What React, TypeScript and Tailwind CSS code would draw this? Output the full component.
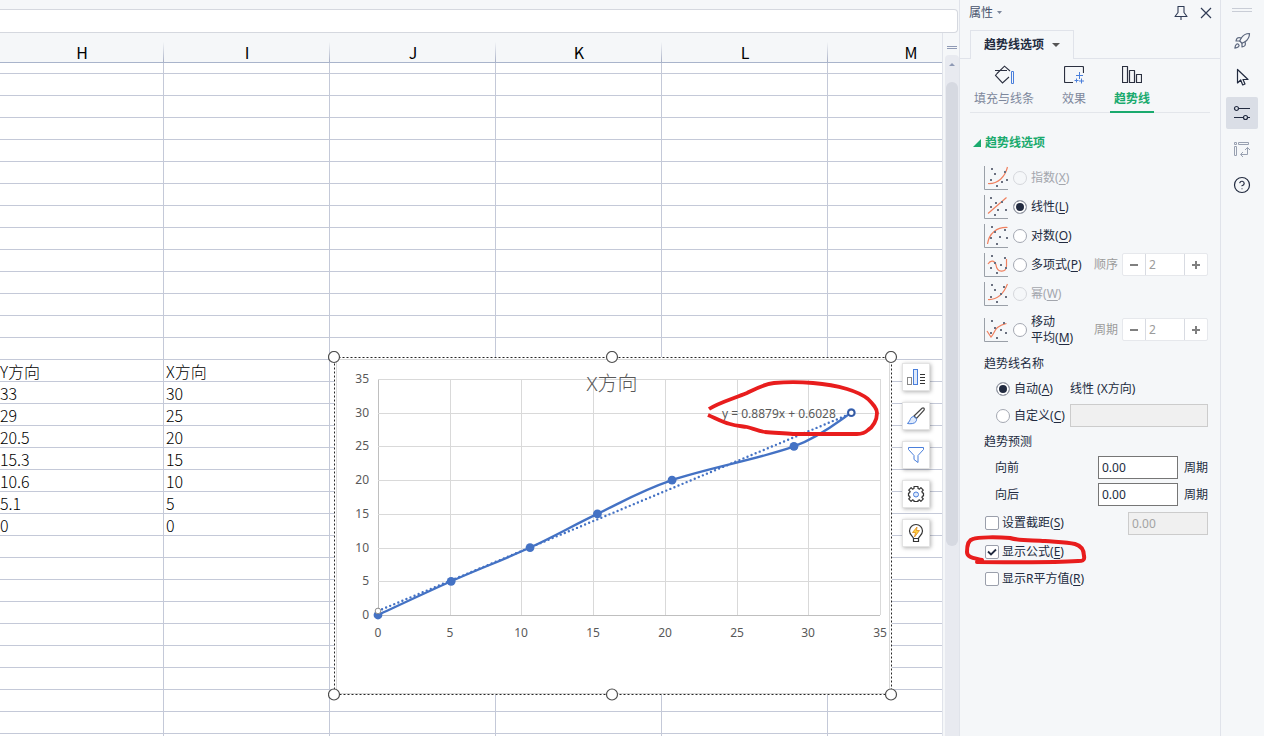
import type { ReactNode } from "react";
import { CircleHelp, Rocket } from "lucide-react";
import clsx from "clsx";

const COLUMNS = ["H", "I", "J", "K", "L", "M"];
const FIRST_DATA_ROW = 14;
const ROW_COUNT = 32;

const DATA = [
    ["Y方向", "X方向"],
    ["33", "30"],
    ["29", "25"],
    ["20.5", "20"],
    ["15.3", "15"],
    ["10.6", "10"],
    ["5.1", "5"],
    ["0", "0"],
];

const POINTS = [
    [0, 0],
    [5.1, 5],
    [10.6, 10],
    [15.3, 15],
    [20.5, 20],
    [29, 25],
    [33, 30],
];

const TICKS = [0, 5, 10, 15, 20, 25, 30, 35];

// chart value -> svg coordinate
const toX = (v: number) => 50 + (v * 502) / 35;
const toY = (v: number) => 264 - (v * 236) / 35;

function smoothPath(points: number[][]) {
    const p = points.map(([x, y]) => [toX(x), toY(y)]);
    let d = `M${p[0][0]} ${p[0][1]}`;
    for (let i = 0; i < p.length - 1; i++) {
        const prev = p[i - 1] ?? p[i];
        const next = p[i + 2] ?? p[i + 1];
        const c1 = [p[i][0] + (p[i + 1][0] - prev[0]) / 6, p[i][1] + (p[i + 1][1] - prev[1]) / 6];
        const c2 = [p[i + 1][0] - (next[0] - p[i][0]) / 6, p[i + 1][1] - (next[1] - p[i][1]) / 6];
        d += `C${c1.join(" ")} ${c2.join(" ")} ${p[i + 1].join(" ")}`;
    }
    return d;
}

function TrendChart() {
    const handles = [
        [6, 6], [284, 6], [563, 6],
        [6, 343.5], [284, 343.5], [563, 343.5],
    ];

    return (
        <svg width="570" height="350" viewBox="0 0 570 350" className="shrink-0 font-['Noto_Sans','Noto_Sans_CJK_SC',sans-serif]">
            <rect x="6" y="6" width="558" height="338" fill="#fff" />
            <rect x="8.5" y="8.5" width="553" height="334" fill="#fff" stroke="#d9d9d9" />
            {TICKS.map((t) => (
                <g key={t} stroke={t === 0 ? "#bfbfbf" : "#d9d9d9"}>
                    <path d={`M50 ${Math.round(toY(t)) + 0.5}H552`} />
                    <path d={`M${Math.round(toX(t)) + 0.5} 28V264`} />
                </g>
            ))}
            <g fill="#595959" fontSize="12">
                {TICKS.map((t) => (
                    <g key={t}>
                        <text x="41" y={Math.round(toY(t)) + 4} textAnchor="end">{t}</text>
                        <text x={Math.round(toX(t))} y="286" textAnchor="middle">{t}</text>
                    </g>
                ))}
                <text x="394" y="67">y = 0.8879x + 0.6028</text>
                <text x="284" y="40" fontSize="20" fontWeight="300" textAnchor="middle">X方向</text>
            </g>
            <path
                d={`M${toX(0)} ${toY(0.6028)}L${toX(33)} ${toY(29.9)}`}
                stroke="#4472c4"
                strokeWidth="2.4"
                strokeLinecap="round"
                strokeDasharray="0 4.4"
            />
            <path d={smoothPath(POINTS)} fill="none" stroke="#4472c4" strokeWidth="2.3" />
            {POINTS.map(([x, y]) => (
                <circle key={x} cx={toX(x)} cy={toY(y)} r="4.4" fill="#4472c4" />
            ))}
            <circle cx={toX(33)} cy={toY(30)} r="3" fill="#fff" stroke="#35589f" strokeWidth="1.5" />
            <circle cx={toX(0)} cy={toY(0.6028)} r="2.8" fill="#fff" stroke="#8c8c8c" />
            <rect x="6.5" y="6.5" width="557" height="337" fill="none" stroke="#262626" strokeDasharray="2 2" />
            {handles.map(([x, y]) => (
                <circle key={`${x}-${y}`} cx={x} cy={y} r="5.5" fill="#fff" stroke="#4d4d4d" strokeWidth="1.2" />
            ))}
            <path
                d="M381 58C390 52 404 48 419 42C429 37 436 33 446 32C458 31 472 31 485 32C498 33 509 35 519 38C529 41 535 44 540 48C545 53 549 57 549 62C549 69 545 76 540 79C537 82 534 83 529 83H465C455 82 446 82 437 81C431 80 426 78 419 76C413 75 408 75 402 73C394 71 387 67 380 64"
                fill="none"
                stroke="#e81d1d"
                strokeWidth="3.8"
                strokeLinejoin="round"
            />
        </svg>
    );
}

function ChartTools() {
    const tools: { label: string; icon: ReactNode }[] = [
        {
            label: "图表元素",
            icon: (
                <>
                    <rect x="1.5" y="10.5" width="4" height="7" stroke="#888" />
                    <rect x="7.5" y="2.5" width="4" height="15" fill="#dfeafb" stroke="#4a7fdb" />
                    <path d="M14 7.5h5M14 10.5h5M14 13.5h5M14 16.5h5" stroke="#333" />
                </>
            ),
        },
        {
            label: "图表样式",
            icon: (
                <>
                    <path d="M8 10 16 2.2c1.5-1 3 .4 2 2L10.5 12.5z" stroke="#444" strokeWidth="1.2" />
                    <path d="M7.5 10.5c-3 .3-3 3-4 4.5L1.5 17.5c3 .6 7 .3 8.5-2 .8-1.2.6-2.2.3-3z" fill="#dfeafb" stroke="#4a7fdb" />
                </>
            ),
        },
        {
            label: "图表筛选",
            icon: <path d="M2.5 2.5h15v2l-5.5 6v7l-4-3v-4l-5.5-6z" stroke="#4a7fdb" />,
        },
        {
            label: "设置图表区域格式",
            icon: (
                <>
                    <path
                        d="M8 2.5h4v2l1.5.6 1.4-1.4 2.4 2.4-1.4 1.4.6 1.5h1v3h-1l-.6 1.5 1.4 1.4-2.4 2.4-1.4-1.4-1.5.6v1h-4v-1l-1.5-.6-1.4 1.4-2.4-2.4 1.4-1.4-.6-1.5h-1V9h1l.6-1.5-1.4-1.4 2.4-2.4 1.4 1.4L8 4.5z"
                        stroke="#333"
                        strokeWidth="1.2"
                        strokeLinejoin="round"
                    />
                    <circle cx="10" cy="10.5" r="2.5" fill="#dfeafb" stroke="#4a7fdb" />
                </>
            ),
        },
        {
            label: "智能推荐",
            icon: (
                <>
                    <path d="M7.5 15.5c0-2-4-3.5-4-7.500a6.500 6.500 0 0 1 13 0c0 4-4 5.500-4 7.500zM7.500 15.500v3h5v-3" stroke="#333" strokeWidth="1.2" />
                    <path d="M11 4 6.5 9.500h3l-1 4.500 5-6.500h-3z" fill="#ffd23f" stroke="#e08a1c" strokeWidth=".8" />
                </>
            ),
        },
    ];

    return (
        <div className="flex flex-col gap-[11px] pt-3">
            {tools.map((t) => (
                <button
                    key={t.label}
                    aria-label={t.label}
                    className="flex size-7 items-center justify-center border border-[#e3e3e3] bg-white shadow-[1px_1px_4px_rgba(0,0,0,0.3)]"
                >
                    <svg width="20" height="20" viewBox="0 0 20 20" fill="none">
                        {t.icon}
                    </svg>
                </button>
            ))}
        </div>
    );
}

function Sheet() {
    return (
        <div className="relative min-w-0 flex-1 overflow-hidden bg-white">
            <table className="w-[994px] table-fixed border-separate border-spacing-0 font-['Noto_Sans_CJK_SC',sans-serif] text-base font-light text-black">
                <thead>
                    <tr className="h-[30px] bg-[#f5f7f9]">
                        {COLUMNS.map((c) => (
                            <th
                                key={c}
                                className={clsx(
                                    "border-b border-[#a9b4cb] bg-[linear-gradient(to_bottom,#f5f7f9_30%,#a9b0c6)] bg-[length:1px_100%] bg-right bg-no-repeat p-0 pt-2 text-center leading-5 font-normal",
                                    c === "H" ? "w-[164px]" : "w-[166px]",
                                )}
                            >
                                {c}
                            </th>
                        ))}
                    </tr>
                </thead>
                <tbody>
                    {Array.from({ length: ROW_COUNT }, (_, r) => (
                        <tr key={r} className={r === 0 ? "h-[11px]" : "h-[22px]"}>
                            {COLUMNS.map((c, i) => (
                                <td
                                    key={c}
                                    className={clsx(
                                        "border-r border-b border-[#c4c9d8] p-0 whitespace-nowrap",
                                        r >= FIRST_DATA_ROW && "pt-px leading-5",
                                        i > 0 && "pl-0.5",
                                    )}
                                >
                                    {DATA[r - FIRST_DATA_ROW]?.[i]}
                                </td>
                            ))}
                        </tr>
                    ))}
                </tbody>
            </table>
            <div className="absolute top-[318px] left-[328px] flex gap-1">
                <TrendChart />
                <ChartTools />
            </div>
        </div>
    );
}

function VerticalScroll() {
    return (
        <div className="flex w-[17px] shrink-0 flex-col border-l border-[#e0e3ea] pl-0.5">
            <div className="flex h-[22px] items-end justify-center pb-1.5">
                <div className="h-[3px] w-2.5 border-y border-[#8f9ab5]" />
            </div>
            <div className="flex flex-1 flex-col items-center rounded-t-sm bg-[#e8eaf0] pt-2">
                <svg width="6" height="3" viewBox="0 0 6 3">
                    <path d="M0 3 3 0l3 3z" fill="#8f9ab5" />
                </svg>
                <div className="mt-4 h-[69%] w-3 rounded-full bg-[#d6d9e1]" />
            </div>
        </div>
    );
}

const RADIO =
    "size-3.5 shrink-0 appearance-none rounded-full border border-[#a4a8b2] bg-white checked:bg-[#222b40] checked:shadow-[inset_0_0_0_2px_#fff] disabled:border-[#d5d7dc] disabled:bg-transparent";
const CHECKBOX = "col-start-1 row-start-1 size-3.5 appearance-none rounded-xs border border-[#9a9fab] bg-white";

function Key({ children }: { children: string }) {
    return (
        <>
            (<span className="underline underline-offset-2">{children}</span>)
        </>
    );
}

function TrendGlyph({ curve, dots }: { curve: string; dots: number[][] }) {
    return (
        <svg width="24" height="24" viewBox="0 0 24 24" fill="none" className="shrink-0">
            <path d="M.5 0v23.5H24" stroke="#9aa0a8" />
            <path d={curve} stroke="#f0805f" strokeWidth="1.2" />
            {dots.map(([x, y]) => (
                <rect key={`${x}-${y}`} x={x} y={y} width="2" height="2" fill="#6b7180" />
            ))}
        </svg>
    );
}

function Stepper({ label }: { label: string }) {
    return (
        <div className="ml-auto flex items-center gap-1 text-[#9b9b9b]">
            <label htmlFor={label}>{label}</label>
            <div className="flex h-[23px] w-[86px] rounded-xs border border-[#e6e8ec] bg-white">
                <button aria-label="减" disabled className="flex w-[22px] items-center justify-center">
                    <span className="h-0.5 w-2 bg-[#808080]" />
                </button>
                <input
                    id={label}
                    disabled
                    defaultValue="2"
                    className="w-10 border-x border-[#d8dbe2] px-[3px]"
                />
                <button aria-label="加" disabled className="flex w-[22px] items-center justify-center">
                    <svg width="8" height="8" viewBox="0 0 8 8">
                        <path d="M0 4h8M4 0v8" stroke="#808080" strokeWidth="2" />
                    </svg>
                </button>
            </div>
        </div>
    );
}

const TREND_TYPES = [
    {
        name: "指数",
        hotkey: "X",
        disabled: true,
        curve: "M4 17.5C14 18 21 11 23.5 1",
        dots: [[7, 2], [10, 7], [20, 5], [6, 13], [17, 15], [22, 13], [12, 19]],
    },
    {
        name: "线性",
        hotkey: "L",
        curve: "M4 18.5 22.5 2.5",
        dots: [[6, 2], [11, 7], [17, 6], [6, 11], [13, 14], [21, 14], [10, 19]],
    },
    {
        name: "对数",
        hotkey: "O",
        curve: "M3.5 20C5 9 13 3 23.5 3.5",
        dots: [[7, 2], [10, 7], [20, 5], [6, 13], [15, 12], [22, 13], [12, 19]],
    },
    {
        name: "多项式",
        hotkey: "P",
        stepper: "顺序",
        curve: "M4 11C7 6 11 8 12 12C13 20 22 20 22.5 13V6",
        dots: [[7, 2], [10, 9], [20, 4], [6, 14], [16, 11], [21, 14], [12, 19]],
    },
    {
        name: "幂",
        hotkey: "W",
        disabled: true,
        curve: "M4 17.5C14 18 20 11 23.5 2",
        dots: [[7, 2], [10, 7], [19, 4], [6, 14], [16, 11], [21, 14], [12, 19]],
    },
    {
        name: "移动平均",
        hotkey: "M",
        stepper: "周期",
        curve: "M3 13 7 19C12 14 9 9 22.5 5.5",
        dots: [[7, 2], [10, 9], [19, 4], [6, 14], [16, 11], [21, 14], [12, 19]],
    },
];

function PanelTabs() {
    const tabs = [
        {
            label: "填充与线条",
            icon: (
                <>
                    <path d="M3 8.5 1.5 10.5 8.5 18 15 12M3 8.5 10.5 1.2 16 6M1 5.5h12" stroke="#2b3040" strokeWidth="1.1" />
                    <path d="M17.5 6.5h2v12h-2z" stroke="#4a7fdb" />
                </>
            ),
        },
        {
            label: "效果",
            icon: (
                <>
                    <path d="M19.5 8V2.5q0-1-1-1h-17q-1 0-1 1v14q0 1 1 1H9" stroke="#2b3040" strokeWidth="1.2" />
                    <path d="M15.5 7v7M12 10.5h7M12.5 13.5v4M10.5 15.5h4M17.5 13.5v5M15 16h5" stroke="#4a7fdb" />
                </>
            ),
        },
        {
            label: "趋势线",
            active: true,
            icon: (
                <path
                    d="M.5 1.5h5v16h-5zM7.5 5.5h5v12h-5zM14.5 9.5h5v8h-5z"
                    stroke="#2b3040"
                    strokeWidth="1.2"
                    strokeLinejoin="round"
                />
            ),
        },
    ];

    return (
        <div className="mx-2.5 flex gap-5 border-b border-[#e3e6eb]">
            {tabs.map((t) => (
                <button
                    key={t.label}
                    className={clsx(
                        "-mb-px flex flex-col items-center border-b-2 px-1 pt-1.5 pb-[3px]",
                        t.active ? "border-[#1aaa6e] font-bold text-[#1aaa6e]" : "border-transparent text-[#7d879c]",
                    )}
                >
                    <svg width="20" height="20" viewBox="0 0 20 20" fill="none">
                        {t.icon}
                    </svg>
                    <span className="mt-[5px] leading-[18px]">{t.label}</span>
                </button>
            ))}
        </div>
    );
}

function Check({ label, hotkey, checked }: { label: string; hotkey: string; checked?: boolean }) {
    return (
        <label className="flex items-center gap-[3px] pl-px">
            <span className="grid">
                <input type="checkbox" defaultChecked={checked} className={clsx("peer", CHECKBOX)} />
                <svg
                    width="14"
                    height="14"
                    viewBox="0 0 14 14"
                    fill="none"
                    className="pointer-events-none col-start-1 row-start-1 hidden peer-checked:block"
                >
                    <path d="M3 6.5 6 9.5 11 4.5" stroke="#222b40" strokeWidth="1.8" />
                </svg>
            </span>
            <span>{label}<Key>{hotkey}</Key></span>
        </label>
    );
}

function PropertyPanel() {
    return (
        <aside className="flex w-[262px] shrink-0 flex-col border-x border-[#e0e3ea] font-['Noto_Sans','Noto_Sans_CJK_SC',sans-serif] text-xs text-[#222b40]">
            <div className="flex h-[25px] items-center pr-1.5 pl-[9px] text-[#46526b]">
                <button className="flex items-center gap-1">
                    属性
                    <svg width="5" height="3" viewBox="0 0 5 3">
                        <path d="M0 0h5L2.5 3z" fill="#7d879c" />
                    </svg>
                </button>
                <button aria-label="固定" className="ml-auto">
                    <svg width="14" height="14" viewBox="0 0 14 14" fill="none">
                        <path d="M4 .5h6v6l3 4H1l3-4zM7 10.5V14" stroke="#2f3b55" strokeWidth="1.1" strokeLinejoin="round" />
                    </svg>
                </button>
                <button aria-label="关闭" className="ml-2.5">
                    <svg width="16" height="16" viewBox="0 0 16 16">
                        <path d="M3 3l10 10M13 3L3 13" stroke="#2f3b55" strokeWidth="1.2" />
                    </svg>
                </button>
            </div>

            <div className="mt-[5px] flex h-[29px]">
                <div className="w-2.5 border-b border-[#e0e3ea]" />
                <button className="flex w-[104px] items-center justify-center gap-2 border border-b-0 border-[#e0e3ea] font-bold">
                    趋势线选项
                    <svg width="8" height="4" viewBox="0 0 8 4">
                        <path d="M0 0h8L4 4z" fill="#555" />
                    </svg>
                </button>
                <div className="flex-1 border-b border-[#e0e3ea]" />
            </div>

            <PanelTabs />

            <h2 className="mt-5 mb-2.5 flex h-5 items-center gap-1 pl-[13px] font-bold text-[#1aaa6e]">
                <svg width="8" height="8" viewBox="0 0 8 8">
                    <path d="M8 0v8H0z" fill="#1aaa6e" />
                </svg>
                趋势线选项
            </h2>

            <div className="flex flex-col pr-3 pl-6">
                {TREND_TYPES.map((t) => (
                    <div
                        key={t.name}
                        className={clsx("flex items-center", t.name === "移动平均" ? "h-[43px]" : "h-[29px]")}
                    >
                        <TrendGlyph curve={t.curve} dots={t.dots} />
                        <label className={clsx("ml-[5px] flex items-center gap-1", t.disabled && "text-[#a3a6ad]")}>
                            <input
                                type="radio"
                                name="trend"
                                disabled={t.disabled}
                                defaultChecked={t.name === "线性"}
                                className={RADIO}
                            />
                            <span className="leading-4">
                                {t.name === "移动平均" ? <>移动<br />平均</> : t.name}
                                <Key>{t.hotkey}</Key>
                            </span>
                        </label>
                        {t.stepper && <Stepper label={t.stepper} />}
                    </div>
                ))}

                <h3 className="leading-[25px]">趋势线名称</h3>
                <div className="flex h-[26px] items-center pl-3">
                    <label className="flex w-[74px] items-center gap-1">
                        <input type="radio" name="trend-name" defaultChecked className={RADIO} />
                        <span>自动<Key>A</Key></span>
                    </label>
                    线性 (X方向)
                </div>
                <div className="flex h-[27px] items-center pl-3">
                    <label className="flex w-[74px] items-center gap-1 whitespace-nowrap">
                        <input type="radio" name="trend-name" className={RADIO} />
                        <span>自定义<Key>C</Key></span>
                    </label>
                    <input aria-label="自定义名称" disabled className="h-[23px] min-w-0 flex-1 border border-[#cccccc] bg-[#f0f0f0]" />
                </div>

                <h3 className="leading-[25px]">趋势预测</h3>
                {["向前", "向后"].map((name) => (
                    <div key={name} className="flex h-[27px] items-center pl-[11px]">
                        <label htmlFor={name}>{name}</label>
                        <input
                            id={name}
                            defaultValue="0.00"
                            className="mr-1.5 ml-auto h-[23px] w-20 border border-[#767676] bg-white px-[3px]"
                        />
                        周期
                    </div>
                ))}

                <div className="flex h-[30px] items-center justify-between">
                    <Check label="设置截距" hotkey="S" />
                    <input
                        aria-label="截距"
                        disabled
                        defaultValue="0.00"
                        className="h-[23px] w-20 border border-[#cccccc] bg-[#f0f0f0] px-[3px] text-[#a3a3a3]"
                    />
                </div>
                <div className="relative flex h-[27px] items-center">
                    <Check label="显示公式" hotkey="E" checked />
                    <svg width="124" height="32" viewBox="0 0 124 32" fill="none" className="pointer-events-none absolute -top-1 -left-5">
                        <path
                            d="M18 26C11 24 3 24 3 18C3 13 4 6 9 5C14 3 33 3 46 4C56 7 69 6 81 7C93 8 103 8 111 10C118 12 120 17 120 22C121 27 118 27 114 27C82 29 50 28 13 28"
                            stroke="#e81d1d"
                            strokeWidth="4"
                            strokeLinecap="round"
                            strokeLinejoin="round"
                        />
                    </svg>
                </div>
                <div className="flex h-[27px] items-center">
                    <Check label="显示R平方值" hotkey="R" />
                </div>
            </div>
        </aside>
    );
}

function ToolRail() {
    const tools = [
        {
            label: "快捷",
            icon: <Rocket className="size-[18px] text-[#5b667d]" strokeWidth={1.6} />,
        },
        {
            label: "选择",
            icon: (
                <svg width="18" height="18" viewBox="0 0 18 18" fill="none">
                    <path d="M4.5 1.5V15l3.2-3 2 5 2.3-1-2-4.5h5z" stroke="#222b40" strokeWidth="1.2" strokeLinejoin="round" />
                </svg>
            ),
        },
        {
            label: "属性",
            active: true,
            icon: (
                <svg width="18" height="18" viewBox="0 0 18 18" fill="none" stroke="#222b40" strokeWidth="1.2">
                    <circle cx="3.5" cy="4.5" r="2" />
                    <path d="M5.5 4.5H17M1 13.5h9.5M14.5 13.5H17" />
                    <circle cx="12.5" cy="13.5" r="2" />
                </svg>
            ),
        },
        {
            label: "切换",
            icon: (
                <svg width="18" height="18" viewBox="0 0 18 18" fill="none" stroke="#98a0b0">
                    <path d="M1.5 2.5h2v2h-2zM5.5 2.5h10v2h-10zM1.5 6.5h2v9h-2zM14.5 7.5v7H8M12 10l2.5-2.500L17 10M10 12l-2.500 2.500L10 17" />
                </svg>
            ),
        },
        {
            label: "帮助",
            icon: <CircleHelp className="size-[18px] text-[#222b40]" strokeWidth={1.6} />,
        },
    ];

    return (
        <nav className="flex w-[43px] shrink-0 flex-col items-center gap-1 pt-2 pr-px">
            <div className="mb-[9px] h-1 w-5 border-y border-[#c9cdd6]" />
            {tools.map((t) => (
                <button
                    key={t.label}
                    aria-label={t.label}
                    className={clsx("flex size-8 items-center justify-center rounded-xs", t.active && "bg-[#dadee6]")}
                >
                    {t.icon}
                </button>
            ))}
        </nav>
    );
}

export default function App() {
    return (
        <div className="flex h-screen overflow-hidden bg-[#f5f7f9]">
            <main className="flex min-w-0 flex-1 flex-col">
                <div className="pt-[9px] pr-px">
                    <input
                        aria-label="编辑栏"
                        className="block h-6 w-full rounded-r-sm border border-l-0 border-[#d5d8df] bg-white px-2 text-sm"
                    />
                </div>
                <div className="flex min-h-0 flex-1">
                    <Sheet />
                    <VerticalScroll />
                </div>
            </main>
            <PropertyPanel />
            <ToolRail />
        </div>
    );
}
